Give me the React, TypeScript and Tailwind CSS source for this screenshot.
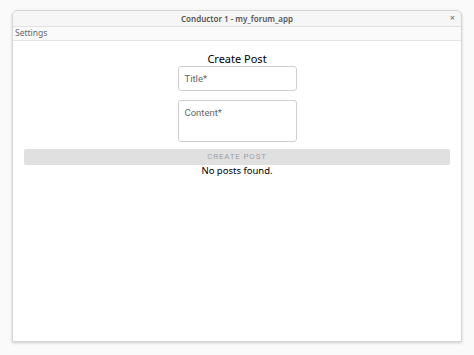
import React from "react"

export default function App() {
    return (
        <div className="w-[474px] h-[355px] bg-[#fafafa] pt-[10px] pl-[12px] font-['Noto_Sans',sans-serif]">
            <div className="w-[450px] h-[332px] flex flex-col bg-white rounded-t-[6px] border border-[#d6d6d6] shadow-[0_1px_3px_rgba(0,0,0,0.18)] overflow-hidden">
                <div className="h-[16px] shrink-0 relative flex items-center justify-center bg-[#f6f6f6] border-b border-[#e2e2e2]">
                    <span className="text-[8px] font-semibold text-[#555] leading-none">Conductor 1 - my_forum_app</span>
                    <span className="absolute right-[6px] top-[2px] text-[9px] text-[#666] leading-none">×</span>
                </div>
                <div className="h-[14px] shrink-0 flex items-center px-[2px] bg-[#fafafa] border-b border-[#e4e4e4]">
                    <span className="text-[8.5px] text-[#666] leading-none">Settings</span>
                </div>
                <div className="flex flex-col items-center px-[11px] pt-[11px]">
                    <h1 className="text-[11px] text-black leading-[14px]">Create Post</h1>
                    <div className="w-[119px] h-[25px] border border-[#cfcfcf] rounded-[3px] px-[6px] flex items-center">
                        <span className="text-[9.5px] text-[#666] leading-none font-['Roboto',sans-serif]">Title*</span>
                    </div>
                    <div className="w-[119px] h-[42px] mt-[9px] border border-[#cfcfcf] rounded-[3px] px-[6px] pt-[6px]">
                        <span className="block text-[9.5px] text-[#666] leading-[11px] font-['Roboto',sans-serif]">Content*</span>
                    </div>
                    <div className="w-full h-[16px] mt-[7px] bg-[#e0e0e0] rounded-[2px] flex items-center justify-center">
                        <span className="text-[8px] tracking-[0.8px] text-[#a0a0a0] font-['Roboto',sans-serif] leading-none">CREATE POST</span>
                    </div>
                    <p className="text-[9.5px] text-black leading-[12px]">No posts found.</p>
                </div>
            </div>
        </div>
    )
}
